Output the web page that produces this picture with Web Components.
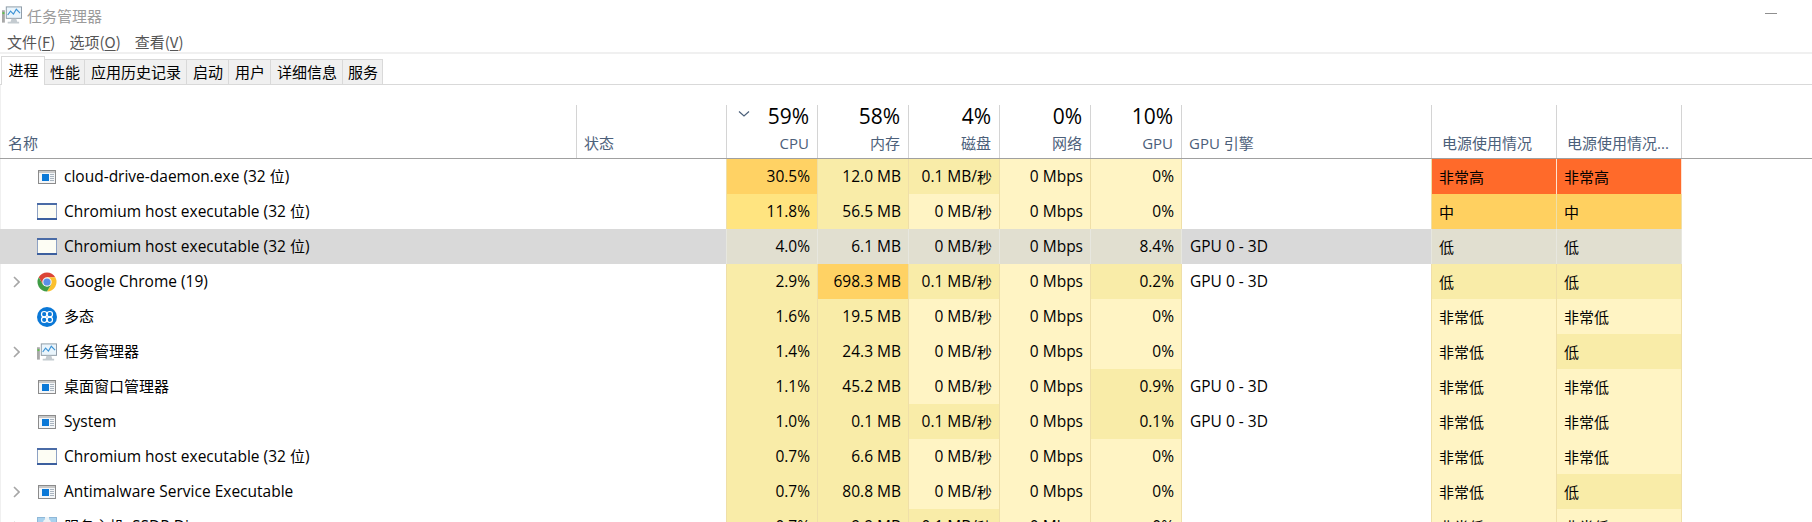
<!DOCTYPE html>
<html lang="zh">
<head>
<meta charset="utf-8">
<title>任务管理器</title>
<style>
  html, body { margin: 0; height: 100%; overflow: hidden; background: #fff; }
  body { font-family: "Open Sans", "Noto Sans CJK SC", sans-serif; font-size: 15px; color: #000; }
</style>
</head>
<body>
<tm-app>
  <tm-titlebar slot="top">任务管理器</tm-titlebar>
  <tm-menu slot="top"></tm-menu>
  <tm-tabs slot="top">
    <tm-tab active>进程</tm-tab>
    <tm-tab w="40">性能</tm-tab>
    <tm-tab w="102">应用历史记录</tm-tab>
    <tm-tab w="42">启动</tm-tab>
    <tm-tab w="42">用户</tm-tab>
    <tm-tab w="72">详细信息</tm-tab>
    <tm-tab w="40">服务</tm-tab>
  </tm-tabs>
  <tm-table></tm-table>
</tm-app>

<script>
const COLS = '577px 150px 91px 91px 91px 91px 91px 250px 125px 125px';
const FONT = '"Open Sans", "Noto Sans CJK SC", sans-serif';
const CJK = '"Noto Sans CJK SC", "Open Sans", sans-serif';

// latin text runs a bit larger than the chinese, so chinese runs get their own span
const zh = s => s.replace(/[\u4e00-\u9fff]+/g, m => `<span class="z">${m}</span>`);
const ZH_CSS = `.z { font: 15px/1 ${CJK}; }`;

class TmApp extends HTMLElement {
  connectedCallback() {
    this.attachShadow({ mode: 'open' });
    this.shadowRoot.innerHTML = `
      <style>
        :host { display: flex; flex-direction: column; height: 522px; overflow: hidden; }
      </style>
      <slot name="top"></slot>
      <slot></slot>`;
  }
}

const ICONS = {
  task: `<svg width="21" height="20" viewBox="0 0 21 20">
      <rect x="0" y="5" width="3" height="13" fill="#a8a8a8"/>
      <rect x="0.5" y="7" width="2" height="2" fill="#5fc24a"/>
      <rect x="4.5" y="1.5" width="16" height="12" fill="#eaf5fc" stroke="#8d9aa6"/>
      <polyline points="6,10 9,6 12,9 15,4 19,8" fill="none" stroke="#3d94d6" stroke-width="1.2"/>
      <path d="M10 14h5l1 3h2v2H6v-2h3z" fill="#c4cbd0"/>
    </svg>`,
  exe: `<svg width="20" height="16" viewBox="0 0 20 16">
      <rect x="1.5" y="1.5" width="17" height="13" fill="#f4f6f8" stroke="#8b8b8b"/>
      <rect x="2" y="2" width="16" height="2" fill="#c8c8c8"/>
      <rect x="5" y="5" width="7" height="7" fill="#0a78d7"/>
      <path d="M13 5.5h4M13 7.5h4M13 9.5h4M13 11.5h4" stroke="#a9b4bf"/>
    </svg>`,
  win: `<svg width="20" height="17" viewBox="0 0 20 17">
      <rect x="0.5" y="0.5" width="19" height="16" fill="#fdfdf4" stroke="#8ea2c4"/>
      <rect x="0" y="0" width="20" height="2" fill="#4a6ba6"/>
      <rect x="0" y="15" width="20" height="2" fill="#3c5f9e"/>
    </svg>`,
  chrome: `<svg width="20" height="20" viewBox="1.5 1.5 21 21">
      <path d="M12 7H20.66A10 10 0 0 0 3.34 7L7.67 14.5Z" fill="#db4437"/>
      <path d="M16.33 14.5L12 22A10 10 0 0 0 20.66 7H12Z" fill="#fbc02d"/>
      <path d="M7.67 14.5L3.34 7A10 10 0 0 0 12 22L16.33 14.5Z" fill="#3f9c45"/>
      <circle cx="12" cy="12" r="5" fill="#f4f4f4"/>
      <circle cx="12" cy="12" r="3.8" fill="#5a8fe8"/>
    </svg>`,
  poly: `<svg width="20" height="20" viewBox="0 0 20 20">
      <circle cx="10" cy="10" r="10" fill="#0a78d7"/>
      <g fill="none" stroke="#fff" stroke-width="1.2">
        <circle cx="7.2" cy="7.2" r="2.7"/><circle cx="12.8" cy="7.2" r="2.7"/>
        <circle cx="7.2" cy="12.8" r="2.7"/><circle cx="12.8" cy="12.8" r="2.7"/>
      </g>
    </svg>`,
  gear: `<svg width="20" height="20" viewBox="0 0 20 20">
      <rect x="0.5" y="0.5" width="19" height="19" fill="#a9d2ee" stroke="#8fb8d8"/>
      <circle cx="10" cy="6" r="4" fill="#eef3f6"/>
      <rect x="8" y="0" width="4" height="3" fill="#eef3f6"/>
    </svg>`
};

class TmIcon extends HTMLElement {
  connectedCallback() {
    this.attachShadow({ mode: 'open' });
    this.shadowRoot.innerHTML = `
      <style>
        :host { display: inline-flex; align-items: center; justify-content: center; width: 20px; height: 20px; flex: none; }
        svg { display: block; }
      </style>
      ${ICONS[this.getAttribute('name')] || ''}`;
  }
}

class TmTitlebar extends HTMLElement {
  connectedCallback() {
    this.attachShadow({ mode: 'open' });
    this.shadowRoot.innerHTML = `
      <style>
        :host { display: flex; align-items: center; height: 30px; flex: none; padding-left: 2px; box-sizing: border-box; }
        .name { margin-left: 5px; font: 15px ${CJK}; color: #9b9b9b; }
        .fill { flex: 1; }
        .min { width: 12px; height: 1px; background: #8f8f8f; margin: -3px 35px 0 0; }
      </style>
      <tm-icon name="task"></tm-icon>
      <span class="name"><slot></slot></span>
      <span class="fill"></span>
      <span class="min"></span>`;
  }
}

class TmMenu extends HTMLElement {
  connectedCallback() {
    this.attachShadow({ mode: 'open' });
    const items = [['文件', 'F'], ['选项', 'O'], ['查看', 'V']];
    this.shadowRoot.innerHTML = `
      <style>
        :host { display: flex; align-items: center; gap: 14px; height: 22px; flex: none; padding-left: 7px;
                border-bottom: 2px solid #f0f0f0; font: 15px ${CJK}; color: #555; }
        u { text-underline-offset: 2px; }
      </style>
      ${items.map(i => `<span>${i[0]}(<u>${i[1]}</u>)</span>`).join('')}`;
  }
}

class TmTabs extends HTMLElement {
  connectedCallback() {
    this.attachShadow({ mode: 'open' });
    this.shadowRoot.innerHTML = `
      <style>
        :host { display: flex; align-items: flex-end; height: 31px; flex: none; padding-left: 1px;
                box-sizing: border-box; border-bottom: 1px solid #d9d9d9; }
      </style>
      <slot></slot>`;
  }
}

class TmTab extends HTMLElement {
  connectedCallback() {
    this.attachShadow({ mode: 'open' });
    const w = this.getAttribute('w') || 44;
    this.shadowRoot.innerHTML = `
      <style>
        :host { display: flex; align-items: center; justify-content: center; box-sizing: border-box;
                width: ${w}px; height: 25px; padding: 0 0 2px 1px; background: #f0f0f0;
                border: 1px solid #d9d9d9; border-width: 1px 1px 0 0; font: 15px ${CJK}; color: #000; }
        :host([active]) { height: 29px; margin-bottom: -1px; background: #fff; border-width: 1px 1px 0 1px;
                padding-bottom: 3px; position: relative; }
      </style>
      <slot></slot>`;
  }
}

// background colours for the heat cells
const HEAT = { 0: '#fff4c4', 1: '#f9eca8', 2: '#ffe480', 3: '#ffd264', p: '#ff6a2a', m: '#ffd060' };
const POWER = { '非常高': 'p', '中': 'm', '低': 1, '非常低': 0 };

function heatOf(v) { return /^0(%| MB| Mbps)/.test(v) ? 0 : 1; }

const ROWS = [
  { icon: 'exe', name: 'cloud-drive-daemon.exe (32 位)', cpu: ['30.5%', 3], mem: '12.0 MB', disk: '0.1 MB/秒', gpu: '0%', p1: '非常高', p2: '非常高' },
  { icon: 'win', name: 'Chromium host executable (32 位)', cpu: ['11.8%', 2], mem: '56.5 MB', disk: '0 MB/秒', gpu: '0%', p1: '中', p2: '中' },
  { icon: 'win', name: 'Chromium host executable (32 位)', sel: true, cpu: ['4.0%', 1], mem: '6.1 MB', disk: '0 MB/秒', gpu: '8.4%', eng: 'GPU 0 - 3D', p1: '低', p2: '低' },
  { icon: 'chrome', more: true, name: 'Google Chrome (19)', cpu: ['2.9%', 1], mem: '698.3 MB', memHeat: 3, disk: '0.1 MB/秒', gpu: '0.2%', eng: 'GPU 0 - 3D', p1: '低', p2: '低' },
  { icon: 'poly', name: '多态', cpu: ['1.6%', 1], mem: '19.5 MB', disk: '0 MB/秒', gpu: '0%', p1: '非常低', p2: '非常低' },
  { icon: 'task', more: true, name: '任务管理器', cpu: ['1.4%', 1], mem: '24.3 MB', disk: '0 MB/秒', gpu: '0%', p1: '非常低', p2: '低' },
  { icon: 'exe', name: '桌面窗口管理器', cpu: ['1.1%', 1], mem: '45.2 MB', disk: '0 MB/秒', gpu: '0.9%', eng: 'GPU 0 - 3D', p1: '非常低', p2: '非常低' },
  { icon: 'exe', name: 'System', cpu: ['1.0%', 1], mem: '0.1 MB', disk: '0.1 MB/秒', gpu: '0.1%', eng: 'GPU 0 - 3D', p1: '非常低', p2: '非常低' },
  { icon: 'win', name: 'Chromium host executable (32 位)', cpu: ['0.7%', 1], mem: '6.6 MB', disk: '0 MB/秒', gpu: '0%', p1: '非常低', p2: '非常低' },
  { icon: 'exe', more: true, name: 'Antimalware Service Executable', cpu: ['0.7%', 1], mem: '80.8 MB', disk: '0 MB/秒', gpu: '0%', p1: '非常低', p2: '低' },
  { icon: 'gear', more: true, name: '服务主机: SSDP Discovery', cpu: ['0.7%', 1], mem: '9.9 MB', disk: '0.1 MB/秒', gpu: '0%', p1: '非常低', p2: '非常低' }
];

class TmHead extends HTMLElement {
  connectedCallback() {
    this.attachShadow({ mode: 'open' });
    const metric = (pct, label, extra) => `
      <div class="c r">
        ${extra || ''}
        <div class="pct">${pct}</div>
        <div class="lab">${zh(label)}</div>
      </div>`;
    this.shadowRoot.innerHTML = `
      <style>
        :host { display: grid; grid-template-columns: ${COLS}; grid-template-rows: 53px; width: 1682px; height: 53px; flex: none; margin-top: 20px; }
        .c { position: relative; display: flex; flex-direction: column; justify-content: flex-end; box-sizing: border-box; min-height: 0;
             border-right: 1px solid #d4d4d4; padding: 0 8px 5px 7px; }
        .c.r { text-align: right; }
        .pct { font: 21px/26px ${FONT}; color: #000; margin-bottom: 4px; flex: none; }
        .lab { font: 15px/20px ${FONT}; color: #4c607a; white-space: nowrap; flex: none; }
        .first { padding-left: 8px; }
        .pw { padding-left: 10px; }
        svg.sort { position: absolute; left: 11px; top: 6px; }
        ${ZH_CSS}
      </style>
      <div class="c first"><div class="lab">${zh('名称')}</div></div>
      <div class="c"><div class="lab">${zh('状态')}</div></div>
      ${metric('59%', 'CPU', '<svg class="sort" width="12" height="6" viewBox="0 0 12 6"><path d="M1 .5l5 4.5 5-4.5" fill="none" stroke="#4c607a" stroke-width="1.2"/></svg>')}
      ${metric('58%', '内存')}
      ${metric('4%', '磁盘')}
      ${metric('0%', '网络')}
      ${metric('10%', 'GPU')}
      <div class="c"><div class="lab">${zh('GPU 引擎')}</div></div>
      <div class="c pw"><div class="lab">${zh('电源使用情况')}</div></div>
      <div class="c pw"><div class="lab">${zh('电源使用情况')}...</div></div>`;
  }
}

class TmRow extends HTMLElement {
  connectedCallback() {
    this.attachShadow({ mode: 'open' });
    const d = this.data;
    const num = (v, h) => `<div class="c r" style="background:${d.sel ? '#e1dfd0' : HEAT[h]}">${zh(v)}</div>`;
    const pow = v => `<div class="c pw ${POWER[v] === 'p' ? 'hot' : ''}" style="background:${d.sel ? '#e1dfd0' : HEAT[POWER[v]]}">${zh(v)}</div>`;
    this.shadowRoot.innerHTML = `
      <style>
        :host { display: grid; grid-template-columns: ${COLS}; width: 1682px; height: 35px; flex: none;
                font: 15.5px/20px ${FONT}; color: #000; }
        :host([sel]) { background: #d9d9d9; }
        .c { display: flex; align-items: center; box-sizing: border-box; padding: 0 7px 1px 8px; white-space: nowrap;
             border-right: 1px solid #efdfa8; }
        :host([sel]) .c { border-right-color: #e7e7df; }
        .r { justify-content: flex-end; }
        .name { border-right: 0; padding: 0 0 0 13px; }
        .gt { width: 7px; height: 12px; flex: none; margin-right: 17px; }
        .blank { background: transparent; }
        .pw { padding-left: 7px; }
        .hot { border-right-color: #ffe3d2; }
        .label { margin-left: 7px; position: relative; top: -1px; }
        ${ZH_CSS}
      </style>
      <div class="c name">
        ${d.more ? '<svg class="gt" viewBox="0 0 7 12"><path d="M1 1l5 5-5 5" fill="none" stroke="#a6a6a6" stroke-width="1.6"/></svg>' : '<span class="gt"></span>'}
        <tm-icon name="${d.icon}"></tm-icon>
        <span class="label">${zh(d.name)}</span>
      </div>
      <div class="c blank"></div>
      ${num(d.cpu[0], d.cpu[1])}
      ${num(d.mem, d.memHeat || 1)}
      ${num(d.disk, heatOf(d.disk))}
      ${num('0 Mbps', 0)}
      ${num(d.gpu, heatOf(d.gpu))}
      <div class="c blank">${d.eng || ''}</div>
      ${pow(d.p1)}
      ${pow(d.p2)}`;
  }
}

class TmTable extends HTMLElement {
  connectedCallback() {
    this.attachShadow({ mode: 'open' });
    this.shadowRoot.innerHTML = `
      <style>
        :host { display: flex; flex-direction: column; flex: 1; min-height: 0; overflow: hidden; box-shadow: inset 1px 0 0 #f0f0f0; }
        .rule { height: 1px; flex: none; background: #a0a0a0; }
        .rows { display: flex; flex-direction: column; }
      </style>
      <tm-head></tm-head>
      <div class="rule"></div>
      <div class="rows"></div>`;
    const box = this.shadowRoot.querySelector('.rows');
    ROWS.forEach(d => {
      const r = document.createElement('tm-row');
      r.data = d;
      if (d.sel) r.setAttribute('sel', '');
      box.appendChild(r);
    });
  }
}

customElements.define('tm-icon', TmIcon);
customElements.define('tm-app', TmApp);
customElements.define('tm-titlebar', TmTitlebar);
customElements.define('tm-menu', TmMenu);
customElements.define('tm-tabs', TmTabs);
customElements.define('tm-tab', TmTab);
customElements.define('tm-head', TmHead);
customElements.define('tm-row', TmRow);
customElements.define('tm-table', TmTable);
</script>
</body>
</html>
